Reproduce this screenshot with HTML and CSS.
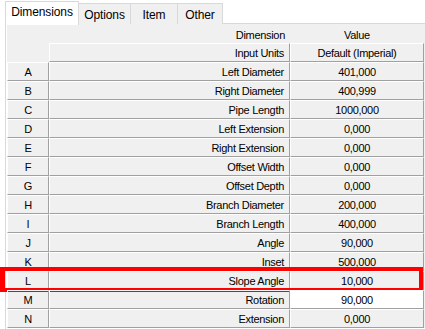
FILE: index.html
```html
<!DOCTYPE html>
<html>
<head>
<meta charset="utf-8">
<link rel="stylesheet" href="styles.css">
</head>
<body>
<div class="tabs">
  <div class="tab active">Dimensions</div>
  <div class="tab">Options</div>
  <div class="tab">Item</div>
  <div class="tab">Other</div>
</div>
<div class="panel">
  <div class="grid">
    <div class="row head">
      <div class="blank"></div>
      <div class="plain name">Dimension</div>
      <div class="plain val">Value</div>
    </div>
    <div class="row">
      <div class="blank"></div>
      <div class="cell name">Input Units</div>
      <div class="cell val">Default (Imperial)</div>
    </div>
    <div class="row"><div class="cell key">A</div><div class="cell name">Left Diameter</div><div class="cell val">401,000</div></div>
    <div class="row"><div class="cell key">B</div><div class="cell name">Right Diameter</div><div class="cell val">400,999</div></div>
    <div class="row"><div class="cell key">C</div><div class="cell name">Pipe Length</div><div class="cell val">1000,000</div></div>
    <div class="row"><div class="cell key">D</div><div class="cell name">Left Extension</div><div class="cell val">0,000</div></div>
    <div class="row"><div class="cell key">E</div><div class="cell name">Right Extension</div><div class="cell val">0,000</div></div>
    <div class="row"><div class="cell key">F</div><div class="cell name">Offset Width</div><div class="cell val">0,000</div></div>
    <div class="row"><div class="cell key">G</div><div class="cell name">Offset Depth</div><div class="cell val">0,000</div></div>
    <div class="row"><div class="cell key">H</div><div class="cell name">Branch Diameter</div><div class="cell val">200,000</div></div>
    <div class="row"><div class="cell key">I</div><div class="cell name">Branch Length</div><div class="cell val">400,000</div></div>
    <div class="row"><div class="cell key">J</div><div class="cell name">Angle</div><div class="cell val">90,000</div></div>
    <div class="row"><div class="cell key">K</div><div class="cell name">Inset</div><div class="cell val">500,000</div></div>
    <div class="row hl"><div class="cell key">L</div><div class="cell name">Slope Angle</div><div class="cell val">10,000</div><div class="mark"></div></div>
    <div class="row"><div class="cell key">M</div><div class="cell name">Rotation</div><div class="cell val edit">90,000</div></div>
    <div class="row"><div class="cell key">N</div><div class="cell name">Extension</div><div class="cell val">0,000</div></div>
  </div>
</div>
</body>
</html>
```

FILE: styles.css
```css
html, body {
  margin: 0;
  padding: 0;
  background: #ffffff;
  overflow: hidden;
}
body {
  width: 425px;
  height: 329px;
  font-family: "Liberation Sans", Arial, sans-serif;
  color: #000;
}
.tabs {
  display: flex;
  align-items: flex-end;
  padding-left: 5px;
  height: 24px;
  box-sizing: border-box;
  position: relative;
  z-index: 2;
}
.tab {
  box-sizing: border-box;
  height: 21px;
  background: #f0f0f0;
  border: 1px solid #d9d9d9;
  border-bottom: none;
  margin-left: -1px;
  font-size: 12px;
  letter-spacing: -0.1px;
  line-height: 20px;
  padding-top: 1px;
  text-align: center;
}
.tab:nth-child(2) { width: 53px; }
.tab:nth-child(3) { width: 48px; }
.tab:nth-child(4) { width: 46px; }
.tab.active {
  margin-left: 0;
  width: 74px;
  height: 24px;
  background: #ffffff;
  line-height: 20px;
  padding-top: 0;
  position: relative;
  z-index: 3;
  margin-bottom: -1px;
}
.panel {
  margin-left: 5px;
  border-left: 1px solid #d9d9d9;
  border-top: 1px solid #d9d9d9;
  background: #ffffff;
  padding-left: 1px;
  margin-top: -1px;
  height: 320px;
}
.grid {
  background: #f0f0f0;
  font-size: 11px;
  letter-spacing: -0.3px;
}
.row {
  display: grid;
  grid-template-columns: 42px 241px 134px;
  height: 19px;
  position: relative;
}
.blank, .plain, .cell {
  box-sizing: border-box;
  height: 19px;
  line-height: 18px;
  white-space: nowrap;
}
.plain { padding-top: 2px; }
.cell {
  border-top: 1px solid #ffffff;
  border-left: 1px solid #ffffff;
  border-right: 1px solid #a0a0a0;
  border-bottom: 1px solid #a0a0a0;
}
.name { text-align: right; padding-right: 5px; }
.val { text-align: center; }
.key { text-align: center; }
.edit { background: #ffffff; }
.mark {
  position: absolute;
  left: -7px;
  top: -4px;
  width: 423px;
  height: 25px;
  box-sizing: border-box;
  border: 4px solid #ff0000;
  border-left-width: 5px;
  pointer-events: none;
}
```
